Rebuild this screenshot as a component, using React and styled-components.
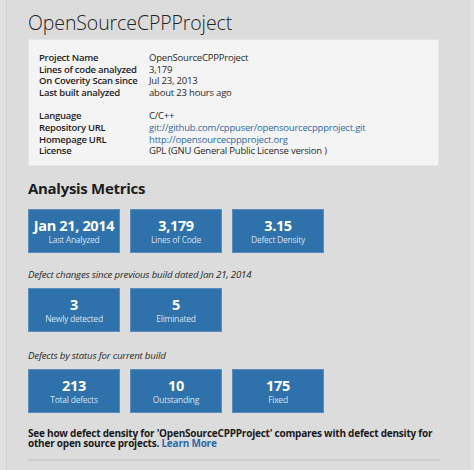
import React from "react";
import styled, { createGlobalStyle } from "styled-components";

const GlobalStyle = createGlobalStyle`
  html, body {
    margin: 0;
    background: #e2e2e2;
  }
  body {
    font-family: "Open Sans", "Noto Sans", "Liberation Sans", sans-serif;
    color: #222;
  }
`;

const Page = styled.div`
  margin-left: 6px;
  width: 464px;
  min-height: 470px;
  box-sizing: border-box;
  background: #dcdcdc;
  border-left: 1px solid #d2d2d2;
  border-right: 1px solid #d6d6d6;
  padding: 9px 0 0 21px;
`;

const Title = styled.h1`
  margin: 0 0 3px;
  font-size: 19.5px;
  font-weight: 300;
  line-height: 27px;
  color: #222;
  letter-spacing: -0.1px;
`;

const InfoCard = styled.div`
  width: 411px;
  box-sizing: border-box;
  background: #f4f4f4;
  border: 1px solid #e6e6e6;
  padding: 12px 10px 8px;
`;

const InfoGroup = styled.dl`
  display: grid;
  grid-template-columns: 110px 1fr;
  margin: 0;
  & + & {
    margin-top: 12px;
  }
`;

const Label = styled.dt`
  font-size: 9.5px;
  line-height: 11.6px;
  font-weight: 600;
  color: #1e1e1e;
  letter-spacing: -0.25px;
  white-space: nowrap;
`;

const Value = styled.dd`
  margin: 0;
  font-size: 9.5px;
  line-height: 11.6px;
  color: #2a2a2a;
  letter-spacing: -0.2px;
  white-space: nowrap;
`;

const Link = styled.a`
  color: #2d6aa6;
  text-decoration: none;
`;

const SectionTitle = styled.h2`
  margin: 12px 0 11px;
  font-size: 15px;
  line-height: 20px;
  font-weight: 700;
  color: #1c1c1c;
  letter-spacing: -0.3px;
`;

const TileRow = styled.div`
  display: flex;
  gap: 10px;
`;

const Tile = styled.div`
  width: 92px;
  height: 44px;
  box-sizing: border-box;
  background: #2e71ab;
  border: 1px solid #5a8dbd;
  display: flex;
  flex-direction: column;
  align-items: center;
  justify-content: center;
  color: #fff;
`;

const TileValue = styled.div`
  font-size: 14.5px;
  line-height: 17px;
  font-weight: 700;
  letter-spacing: -0.35px;
  white-space: nowrap;
`;

const TileLabel = styled.div`
  font-size: 8.5px;
  line-height: 11px;
  color: #d5e2ef;
  letter-spacing: -0.25px;
`;

const Caption = styled.p`
  margin: ${(p) => p.$gap}px 0 7px;
  font-size: 9.7px;
  line-height: 13px;
  font-style: italic;
  color: #2a2a2a;
  letter-spacing: -0.2px;
`;

const Note = styled.p`
  margin: 15px 0 0;
  width: 416px;
  font-size: 10px;
  line-height: 10px;
  font-weight: 700;
  color: #1a1a1a;
  letter-spacing: -0.22px;
`;

const Rule = styled.hr`
  margin: 11px 0 0;
  width: 412px;
  height: 2px;
  border: 0;
  background: #cecece;
`;

const details = [
  [
    ["Project Name", "OpenSourceCPPProject"],
    ["Lines of code analyzed", "3,179"],
    ["On Coverity Scan since", "Jul 23, 2013"],
    ["Last built analyzed", "about 23 hours ago"],
  ],
  [
    ["Language", "C/C++"],
    ["Repository URL", "git://github.com/cppuser/opensourcecppproject.git", true],
    ["Homepage URL", "http://opensourcecppproject.org", true],
    ["License", "GPL (GNU General Public License version )"],
  ],
];

const overview = [
  ["Jan 21, 2014", "Last Analyzed"],
  ["3,179", "Lines of Code"],
  ["3.15", "Defect Density"],
];

const changes = [
  ["3", "Newly detected"],
  ["5", "Eliminated"],
];

const status = [
  ["213", "Total defects"],
  ["10", "Outstanding"],
  ["175", "Fixed"],
];

const Tiles = ({ items }) => (
  <TileRow>
    {items.map(([value, label]) => (
      <Tile key={label}>
        <TileValue>{value}</TileValue>
        <TileLabel>{label}</TileLabel>
      </Tile>
    ))}
  </TileRow>
);

export default function App() {
  return (
    <>
      <GlobalStyle />
      <Page>
        <Title>OpenSourceCPPProject</Title>
        <InfoCard>
          {details.map((group, i) => (
            <InfoGroup key={i}>
              {group.map(([label, value, isLink]) => (
                <React.Fragment key={label}>
                  <Label>{label}</Label>
                  <Value>{isLink ? <Link href="#">{value}</Link> : value}</Value>
                </React.Fragment>
              ))}
            </InfoGroup>
          ))}
        </InfoCard>

        <SectionTitle>Analysis Metrics</SectionTitle>
        <Tiles items={overview} />

        <Caption $gap={15}>Defect changes since previous build dated Jan 21, 2014</Caption>
        <Tiles items={changes} />

        <Caption $gap={17}>Defects by status for current build</Caption>
        <Tiles items={status} />

        <Note>
          See how defect density for 'OpenSourceCPPProject' compares with defect
          density for other open source projects. <Link href="#">Learn More</Link>
        </Note>
        <Rule />
      </Page>
    </>
  );
}
